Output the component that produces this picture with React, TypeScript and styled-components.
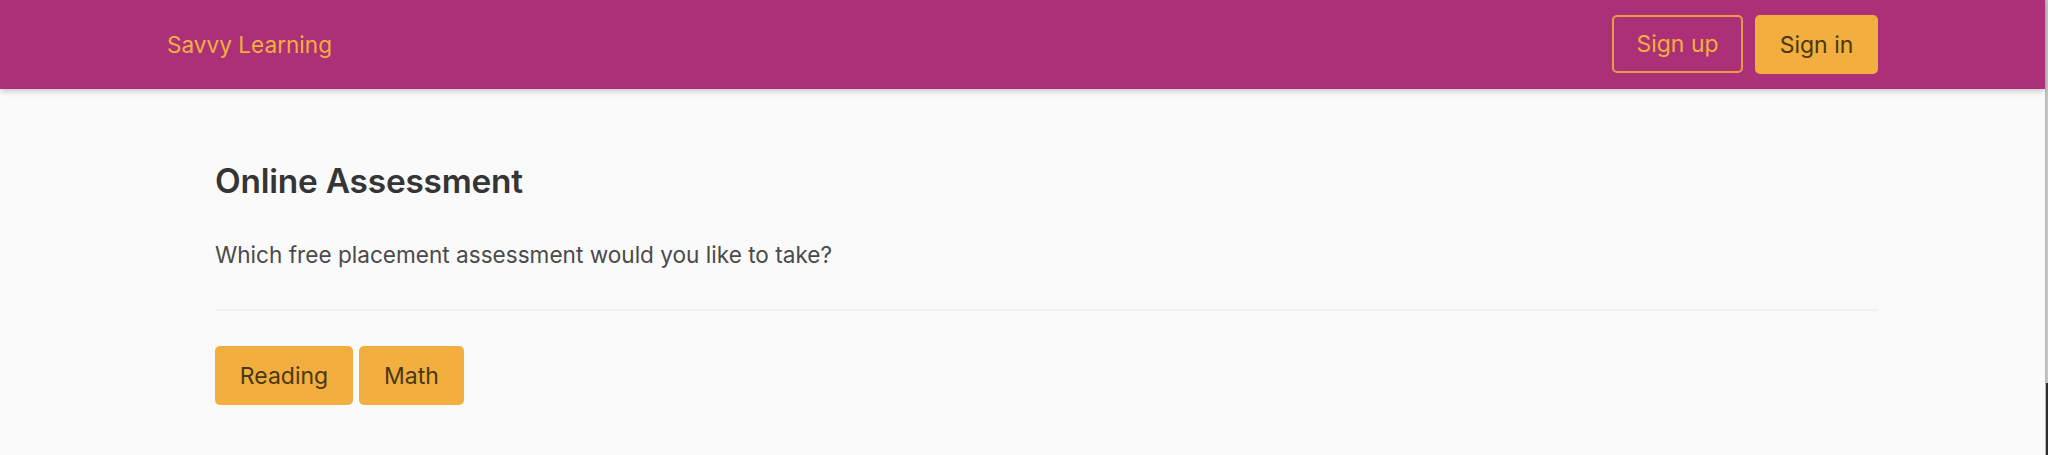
import styled, { createGlobalStyle } from 'styled-components'

const GlobalStyle = createGlobalStyle`
  * {
    box-sizing: border-box;
  }

  body {
    margin: 0;
    background: #fafafa;
    font-family: Inter, 'Noto Sans', Arial, sans-serif;
  }
`

const Frame = styled.div`
  display: flex;
  min-height: 455px;
`

const Page = styled.div`
  flex: 1;
  background: #fafafa;
`

const WindowEdge = styled.div`
  width: 3px;
  background: linear-gradient(to bottom, #c4c4c4 0, #c4c4c4 383px, #2e2e2e 383px, #2e2e2e 100%);
  border-left: 1px solid #b9b9b9;
`

const NavBar = styled.header`
  height: 89px;
  display: flex;
  align-items: center;
  justify-content: space-between;
  padding: 0 167px 0 167px;
  background: #ab3077;
  box-shadow: 0 2px 6px rgba(0, 0, 0, 0.22);
  position: relative;
`

const Brand = styled.a`
  color: #f3ae3d;
  font-size: 22.6px;
  text-decoration: none;
`

const NavActions = styled.div`
  display: flex;
  gap: 12px;
`

const Button = styled.button<{ $outline?: boolean; $w: number }>`
  width: ${(p) => p.$w}px;
  height: ${(p) => (p.$outline ? 58 : 59)}px;
  border-radius: 5px;
  font-family: inherit;
  font-size: 23px;
  cursor: pointer;
  border: ${(p) => (p.$outline ? '2px solid rgba(243, 174, 61, 0.85)' : 'none')};
  background: ${(p) => (p.$outline ? 'transparent' : '#f2ae3e')};
  color: ${(p) => (p.$outline ? '#f3ae3d' : '#4a3812')};
`

const Main = styled.main`
  padding: 0 167px 0 215px;
`

const Title = styled.h1`
  margin: 0;
  padding-top: 72px;
  font-size: 33.4px;
  line-height: 40px;
  font-weight: 600;
  color: #353535;
  letter-spacing: -0.2px;
`

const Lead = styled.p`
  margin: 39px 0 0;
  font-size: 22.6px;
  line-height: 30px;
  color: #4a4a4a;
`

const Rule = styled.hr`
  margin: 39px 0 0;
  border: none;
  height: 2px;
  background: #f1f1f1;
`

const Choices = styled.div`
  display: flex;
  gap: 6px;
  margin-top: 35px;
`

export default function App() {
  return (
    <>
      <GlobalStyle />
      <Frame>
        <Page>
          <NavBar>
            <Brand href="#">Savvy Learning</Brand>
            <NavActions>
              <Button $outline $w={131}>Sign up</Button>
              <Button $w={123}>Sign in</Button>
            </NavActions>
          </NavBar>
          <Main>
            <Title>Online Assessment</Title>
            <Lead>Which free placement assessment would you like to take?</Lead>
            <Rule />
            <Choices>
              <Button $w={138}>Reading</Button>
              <Button $w={105}>Math</Button>
            </Choices>
          </Main>
        </Page>
        <WindowEdge />
      </Frame>
    </>
  )
}
